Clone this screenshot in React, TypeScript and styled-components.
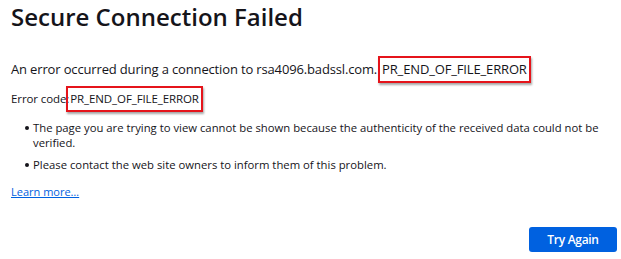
import React from 'react';
import styled, { createGlobalStyle } from 'styled-components';

const GlobalStyle = createGlobalStyle`
  html, body {
    margin: 0;
    padding: 0;
    background: #ffffff;
  }
  body {
    font-family: 'Open Sans', 'Noto Sans', sans-serif;
    color: #15141a;
  }
`;

const Page = styled.main`
  width: 606px;
  padding: 0 0 0 11px;
  display: flex;
  flex-direction: column;
`;

const Title = styled.h1`
  margin: 2px 0 0;
  font-size: 24px;
  line-height: 30px;
  font-weight: 600;
`;

const Lead = styled.p`
  margin: 24px 0 0;
  font-size: 13px;
  letter-spacing: -0.15px;
  line-height: 27px;
  display: flex;
  align-items: center;
  white-space: nowrap;
`;

const CodeLine = styled.p`
  margin: 3px 0 0;
  font-size: 11.5px;
  letter-spacing: -0.1px;
  line-height: 26px;
  display: flex;
  align-items: center;
`;

const Marked = styled.span<{ $big?: boolean }>`
  box-sizing: border-box;
  display: inline-flex;
  align-items: center;
  height: ${(p) => (p.$big ? 27 : 26)}px;
  padding: 0 2px;
  margin-left: ${(p) => (p.$big ? 1 : -3)}px;
  border: 2px solid #e5141b;
  box-shadow: 1px 2px 2px rgba(0, 0, 0, 0.35);
`;

const List = styled.ul`
  list-style: none;
  margin: 8px 0 0;
  padding: 0 0 0 22px;
  font-size: 11.3px;
  line-height: 15px;
`;

const Item = styled.li`
  position: relative;
  margin-bottom: 7px;

  &::before {
    content: '';
    position: absolute;
    left: -8px;
    top: 6px;
    width: 4px;
    height: 4px;
    border-radius: 50%;
    background: #15141a;
  }
`;

const Link = styled.a`
  margin-top: 5px;
  font-size: 11px;
  line-height: 16px;
  color: #0061e0;
  text-decoration: underline;
  align-self: flex-start;
`;

const Actions = styled.div`
  display: flex;
  justify-content: flex-end;
  margin-top: 27px;
`;

const Button = styled.button`
  width: 88px;
  height: 25px;
  border: none;
  border-radius: 3px;
  background: #0061e0;
  color: #ffffff;
  font-family: 'Open Sans', 'Noto Sans', sans-serif;
  font-size: 12px;
  letter-spacing: -0.3px;
  font-weight: 600;
  padding: 0;
`;

export default function App() {
  return (
    <>
      <GlobalStyle />
      <Page>
        <Title>Secure Connection Failed</Title>
        <Lead>
          An error occurred during a connection to rsa4096.badssl.com.
          <Marked $big>PR_END_OF_FILE_ERROR</Marked>
        </Lead>
        <CodeLine>
          Error code:<Marked>PR_END_OF_FILE_ERROR</Marked>
        </CodeLine>
        <List>
          <Item>
            The page you are trying to view cannot be shown because the authenticity of the received data could not be verified.
          </Item>
          <Item>Please contact the web site owners to inform them of this problem.</Item>
        </List>
        <Link href="#">Learn more…</Link>
        <Actions>
          <Button>Try Again</Button>
        </Actions>
      </Page>
    </>
  );
}
